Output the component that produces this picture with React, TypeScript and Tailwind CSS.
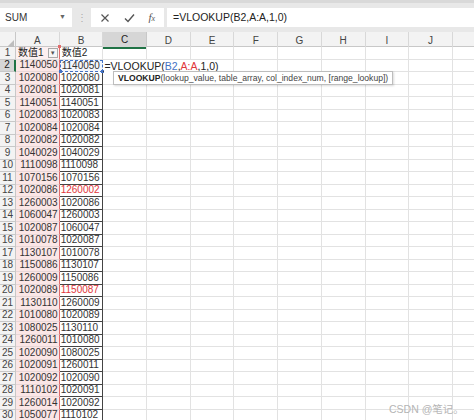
import React from "react";

const colA = [
    "1140050", "1020080", "1020081", "1140051", "1020083", "1020084", "1020082",
    "1040029", "1110098", "1070156", "1020086", "1260003", "1060047", "1020087",
    "1010078", "1130107", "1150086", "1260009", "1020089", "1130110", "1010080",
    "1080025", "1260011", "1020090", "1020091", "1020092", "1110102", "1260014",
    "1050077",
];

const colB = [
    "1140050", "1020080", "1020081", "1140051", "1020083", "1020084", "1020082",
    "1040029", "1110098", "1070156", "1260002", "1020086", "1260003", "1060047",
    "1020087", "1010078", "1130107", "1150086", "1150087", "1260009", "1020089",
    "1130110", "1010080", "1080025", "1260011", "1020090", "1020091", "1020092",
    "1110102",
];

const redB = ["1260002", "1150087"];
const letters = ["A", "B", "C", "D", "E", "F", "G", "H", "I", "J", ""];

const App: React.FC = () => {
    return (
        <div className="w-[474px] h-[420px] overflow-hidden bg-white text-[#222] font-['Liberation_Sans','Noto_Sans_CJK_SC',sans-serif] relative">
            {/* Formula bar */}
            <div className="h-[32px] bg-[#e8e8e8] border-t-[3px] border-[#d9d9d9] flex items-start pt-[5px]">
                <div className="w-[72px] h-[19px] bg-white flex items-center justify-between pl-[5px] pr-[6px]">
                    <span className="text-[10px] text-[#333]">SUM</span>
                    <span className="text-[7px] text-[#666]">▼</span>
                </div>
                <div className="w-[19px] h-[19px] flex items-center justify-center text-[#aaa] text-[10px]">⋮</div>
                <div className="w-[73px] h-[19px] bg-white flex items-center justify-around px-[2px] text-[#555]">
                    <svg width="10" height="10" viewBox="0 0 10 10">
                        <path d="M1.5 1.5 L8.5 8.5 M8.5 1.5 L1.5 8.5" stroke="#555" strokeWidth="1.2" />
                    </svg>
                    <svg width="11" height="10" viewBox="0 0 11 10">
                        <path d="M1 5.5 L4 8.5 L10 1.5" stroke="#555" strokeWidth="1.4" fill="none" />
                    </svg>
                    <span className="text-[11px] italic font-['Liberation_Serif',serif] text-[#555]">
                        f<span className="text-[8px]">x</span>
                    </span>
                </div>
                <div className="ml-[3px] flex-1 h-[19px] bg-white flex items-center pl-[6px] text-[10.5px] text-[#222]">
                    =VLOOKUP(B2,A:A,1,0)
                </div>
            </div>

            {/* Column headers */}
            <div className="grid grid-cols-[16px_repeat(11,43.7px)] h-[15px] bg-[#f3f3f3] border-b border-[#c8c8c8]">
                <div className="border-r border-[#c8c8c8] flex items-end justify-end pr-[1px] pb-[1px]">
                    <div className="w-0 h-0 border-l-[8px] border-l-transparent border-b-[8px] border-b-[#bdbdbd]" />
                </div>
                {letters.map((l, i) =>
                    l === "C" ? (
                        <div
                            key={i}
                            className="border-r border-[#c8c8c8] bg-[#d6d6d6] border-b-2 border-b-[#217346] flex items-center justify-center text-[10px] text-[#222]"
                        >
                            {l}
                        </div>
                    ) : (
                        <div
                            key={i}
                            className="border-r border-[#d8d8d8] flex items-center justify-center text-[10px] text-[#444]"
                        >
                            {l}
                        </div>
                    ),
                )}
            </div>

            {/* Row 1 */}
            <div className="grid grid-cols-[16px_repeat(11,43.7px)] h-[12.5px]">
                <div className="bg-[#f3f3f3] border-r border-b border-[#c8c8c8] flex items-center justify-center text-[10px] text-[#444] leading-none">
                    1
                </div>
                <div className="bg-[#fdf0f0] border-r border-b border-r-[#e06c6c] border-b-[#e2e2e2] flex items-center justify-between pl-[2px] pr-[1px] text-[10px] leading-none relative">
                    <span>数值1</span>
                    <span className="w-[10px] h-[10px] border border-[#aaa] bg-[#f6f6f6] flex items-center justify-center text-[6px] text-[#555]">
                        ▼
                    </span>
                    <span className="absolute -right-[2px] -top-[2px] w-[3px] h-[3px] bg-[#e06c6c]" />
                </div>
                <div className="border-r border-b border-[#e2e2e2] flex items-center pl-[2px] text-[10px] leading-none">
                    数值2
                </div>
                {letters.slice(2).map((l, i) => (
                    <div key={i} className="border-r border-b border-[#e2e2e2]" />
                ))}
            </div>

            {/* Data rows */}
            {colA.map((a, i) => {
                const row = i + 2;
                const b = colB[i];
                const isRed = redB.includes(b);
                const active = row === 2;
                return (
                    <div key={row} className="grid grid-cols-[16px_repeat(11,43.7px)] h-[12.5px]">
                        {active ? (
                            <div className="bg-[#d6d6d6] border-r-2 border-r-[#217346] border-b border-b-[#c8c8c8] flex items-center justify-center text-[10px] text-[#222] leading-none">
                                {row}
                            </div>
                        ) : (
                            <div className="bg-[#f3f3f3] border-r border-b border-[#c8c8c8] flex items-center justify-center text-[10px] text-[#444] leading-none">
                                {row}
                            </div>
                        )}
                        <div className="bg-[#fbe6e6] border-r border-b border-r-[#e06c6c] border-b-[#e6d6d6] flex items-center justify-end pr-[1px] text-[10px] leading-none text-[#333] overflow-hidden">
                            {a}
                        </div>
                        {active ? (
                            <div className="border border-dashed border-[#4472c4] bg-[#f3f6fc] flex items-center pl-[1px] text-[10px] leading-none text-[#333] relative">
                                {b}
                                <span className="absolute -left-[2px] -bottom-[2px] w-[3px] h-[3px] bg-[#4472c4]" />
                                <span className="absolute -right-[2px] -bottom-[2px] w-[3px] h-[3px] bg-[#4472c4]" />
                            </div>
                        ) : (
                            <div
                                className={
                                    isRed
                                        ? "border-r border-b border-[#444] flex items-center pl-[1px] text-[10px] leading-none text-[#e0363b] overflow-hidden"
                                        : "border-r border-b border-[#444] flex items-center pl-[1px] text-[10px] leading-none text-[#333] overflow-hidden"
                                }
                            >
                                {b}
                            </div>
                        )}
                        {active ? (
                            <div className="border-b border-r border-[#3b3b3b] relative">
                                <span className="absolute left-[1px] top-0 whitespace-nowrap text-[10.5px] leading-[12px] text-[#222] bg-white pr-[1px]">
                                    =VLOOKUP(<span className="text-[#4472c4]">B2</span>,<span className="text-[#e0363b]">A:A</span>,1,0)
                                </span>
                            </div>
                        ) : (
                            <div className="border-r border-b border-[#e2e2e2]" />
                        )}
                        {letters.slice(3).map((l, j) => (
                            <div key={j} className="border-r border-b border-[#e2e2e2]" />
                        ))}
                    </div>
                );
            })}

            {/* Function tooltip */}
            <div className="absolute left-[113px] top-[71px] w-[280px] h-[14px] bg-white border border-[#bdbdbd] shadow-[1px_1px_2px_rgba(0,0,0,0.15)] flex items-center pl-[4px] text-[8.6px] text-[#444] whitespace-nowrap overflow-hidden">
                <span className="font-bold text-[#222]">VLOOKUP</span>
                (lookup_value, table_array, col_index_num, [range_lookup])
            </div>

            {/* Watermark */}
            <div className="absolute left-[389px] top-[402px] text-[10.5px] text-[#b5b5b5] whitespace-nowrap">
                CSDN @笔记。
            </div>
        </div>
    );
};

export default App;
